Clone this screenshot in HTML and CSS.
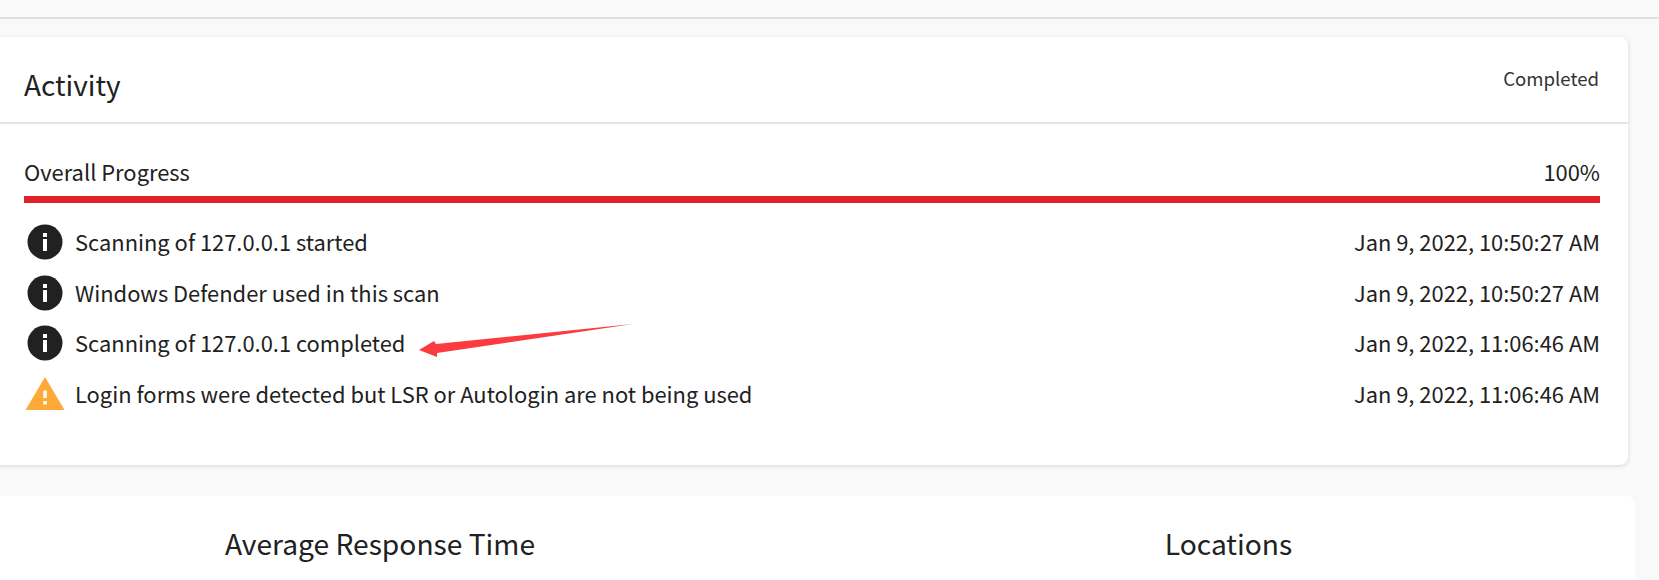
FILE: index.html
```html
<!DOCTYPE html>
<html lang="en">
<head>
    <meta charset="UTF-8">
    <meta name="viewport" content="width=device-width, initial-scale=1.0">
    <title>Activity</title>
    <link rel="stylesheet" href="styles.css">
</head>
<body>
    <div class="topbar"></div>

    <div class="card activity">
        <div class="card-head">
            <h2>Activity</h2>
            <span class="status">Completed</span>
        </div>
        <div class="card-body">
            <div class="progress-label">
                <span>Overall Progress</span>
                <span>100%</span>
            </div>
            <div class="progress-bar"></div>

            <div class="log">
                <div class="log-row">
                    <svg class="icon" viewBox="0 0 36 36"><circle cx="18" cy="18" r="17.5" fill="#212121"/><rect x="16" y="9" width="4" height="4" fill="#fff"/><rect x="16" y="15" width="4" height="12" fill="#fff"/></svg>
                    <span class="msg">Scanning of 127.0.0.1 started</span>
                    <span class="time">Jan 9, 2022, 10:50:27 AM</span>
                </div>
                <div class="log-row">
                    <svg class="icon" viewBox="0 0 36 36"><circle cx="18" cy="18" r="17.5" fill="#212121"/><rect x="16" y="9" width="4" height="4" fill="#fff"/><rect x="16" y="15" width="4" height="12" fill="#fff"/></svg>
                    <span class="msg">Windows Defender used in this scan</span>
                    <span class="time">Jan 9, 2022, 10:50:27 AM</span>
                </div>
                <div class="log-row">
                    <svg class="icon" viewBox="0 0 36 36"><circle cx="18" cy="18" r="17.5" fill="#212121"/><rect x="16" y="9" width="4" height="4" fill="#fff"/><rect x="16" y="15" width="4" height="12" fill="#fff"/></svg>
                    <span class="msg">Scanning of 127.0.0.1 completed</span>
                    <span class="time">Jan 9, 2022, 11:06:46 AM</span>
                </div>
                <div class="log-row">
                    <svg class="icon warn" viewBox="0 0 36 36"><path d="M18 1 L37.5 34 H-1.5 Z" fill="#ffa938"/><rect x="16.25" y="14.5" width="3.5" height="7.5" fill="#fff"/><rect x="16.25" y="25" width="3.5" height="3.5" fill="#fff"/></svg>
                    <span class="msg">Login forms were detected but LSR or Autologin are not being used</span>
                    <span class="time">Jan 9, 2022, 11:06:46 AM</span>
                </div>
            </div>
        </div>
        <svg class="arrow" viewBox="0 0 216 36" width="216" height="36"><path d="M1 27 L16 18 L18 21 L215 1 L19 30 L19 34 Z" fill="#fb3b3f"/></svg>
    </div>

    <div class="card charts">
        <h3>Average Response Time</h3>
        <h3>Locations</h3>
    </div>
</body>
</html>
```

FILE: styles.css
```css
html, body{
    margin: 0;
    height: 580px;
    overflow: hidden;
}

body{
    background-color: #f9f9f9;
    color: #212121;
    font-family: "Noto Sans CJK SC", "Noto Sans", sans-serif;
    font-size: 21.9px;
}

.topbar{
    height: 17px;
    border-bottom: 2px solid #e0e0e0;
}

.card{
    background-color: white;
    border-radius: 8px;
}

.activity{
    position: relative;
    margin-top: 18px;
    margin-left: -6px;
    width: 1634px;
    height: 428px;
    box-shadow: 0 1px 4px rgba(0, 0, 0, 0.15);
}

.card-head{
    display: flex;
    justify-content: space-between;
    height: 85px;
    padding: 0 29px 0 30px;
    border-bottom: 2px solid #e4e4e4;
}

h2{
    margin: 28px 0 0;
    font-size: 28px;
    font-weight: 400;
    line-height: 38px;
}

.status{
    margin-top: 28px;
    font-size: 18.6px;
    color: #333;
    line-height: 26px;
}

.card-body{
    padding: 0 28px 0 30px;
}

.progress-label{
    display: flex;
    justify-content: space-between;
    margin-top: 34px;
    line-height: 28px;
}

.progress-bar{
    height: 7px;
    margin-top: 10px;
    background-color: #e1222b;
}

.log{
    margin-top: 14px;
}

.log-row{
    display: flex;
    align-items: center;
    height: 50.6px;
    line-height: 28px;
}

.icon{
    width: 36px;
    height: 36px;
    margin-left: 2.5px;
    flex-shrink: 0;
}

.warn{
    overflow: visible;
}

.msg{
    margin-left: 12.5px;
}

.time{
    margin-left: auto;
}

.arrow{
    position: absolute;
    left: 424px;
    top: 286px;
}

.charts{
    display: grid;
    grid-template-columns: 772px 813px;
    gap: 56px;
    margin-top: 31px;
    margin-left: -6px;
    width: 1641px;
    height: 100px;
}

h3{
    margin: 27px 0 0;
    font-size: 28.2px;
    font-weight: 400;
    line-height: 40px;
    text-align: center;
}
```
